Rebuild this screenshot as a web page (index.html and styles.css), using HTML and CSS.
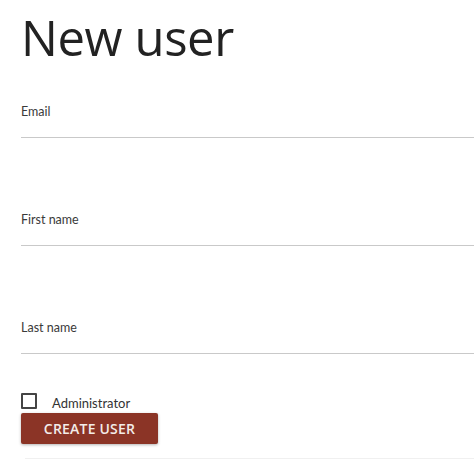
FILE: index.html
```html
<!DOCTYPE html>
<html>
<head>
<meta charset="utf-8">
<link rel="stylesheet" href="styles.css">
</head>
<body>
<div class="page">
  <h1 class="title">New user</h1>
  <form class="form">
    <div class="field">
      <label class="label" for="email">Email</label>
      <input class="input" id="email" type="text">
    </div>
    <div class="field">
      <label class="label" for="first">First name</label>
      <input class="input" id="first" type="text">
    </div>
    <div class="field">
      <label class="label" for="last">Last name</label>
      <input class="input" id="last" type="text">
    </div>
    <label class="check">
      <span class="box"></span>
      <span class="check-text">Administrator</span>
    </label>
    <button class="btn" type="button">CREATE USER</button>
    <div class="rule"></div>
  </form>
</div>
</body>
</html>
```
FILE: styles.css
```css
* { box-sizing: border-box; }
html, body { margin: 0; padding: 0; background: #fff; }
body { font-family: "Lato", "Open Sans", sans-serif; color: #222; overflow: hidden; }
.page { padding: 7px 0 0 21px; width: 100%; }
.title {
  margin: 0;
  font-family: "Open Sans", sans-serif;
  font-size: 49px;
  line-height: 60px;
  font-weight: 400;
  color: #222;
  letter-spacing: -0.4px;
}
.form { display: flex; flex-direction: column; }
.field { display: flex; flex-direction: column; margin-top: 37px; }
.field + .field { margin-top: 74px; }
.label { font-size: 12.5px; line-height: 16px; color: #3a3a3a; }
.input {
  border: 0;
  border-bottom: 1px solid #c9c9c9;
  height: 18px;
  padding: 0;
  width: 100%;
  outline: none;
  background: transparent;
}
.field:last-of-type .input { height: 19px; }
.check { display: flex; align-items: center; gap: 15px; margin-top: 38px; height: 17px; }
.box { width: 16px; height: 16px; border: 2px solid #444; border-radius: 1px; }
.check-text { font-size: 13px; color: #333; position: relative; top: 2px; }
.btn {
  align-self: flex-start;
  margin-top: 4px;
  width: 137px;
  height: 31px;
  border: 0;
  border-radius: 2px;
  background: #8b3426;
  color: #f3ece9;
  font-family: "Open Sans", sans-serif;
  font-weight: 600;
  font-size: 14px;
  letter-spacing: 0.2px;
  box-shadow: 0 1px 3px rgba(0,0,0,0.3);
  padding: 0;
}
.rule { height: 1px; background: #f0f0f0; margin-top: 14px; margin-left: 4px; }
```
